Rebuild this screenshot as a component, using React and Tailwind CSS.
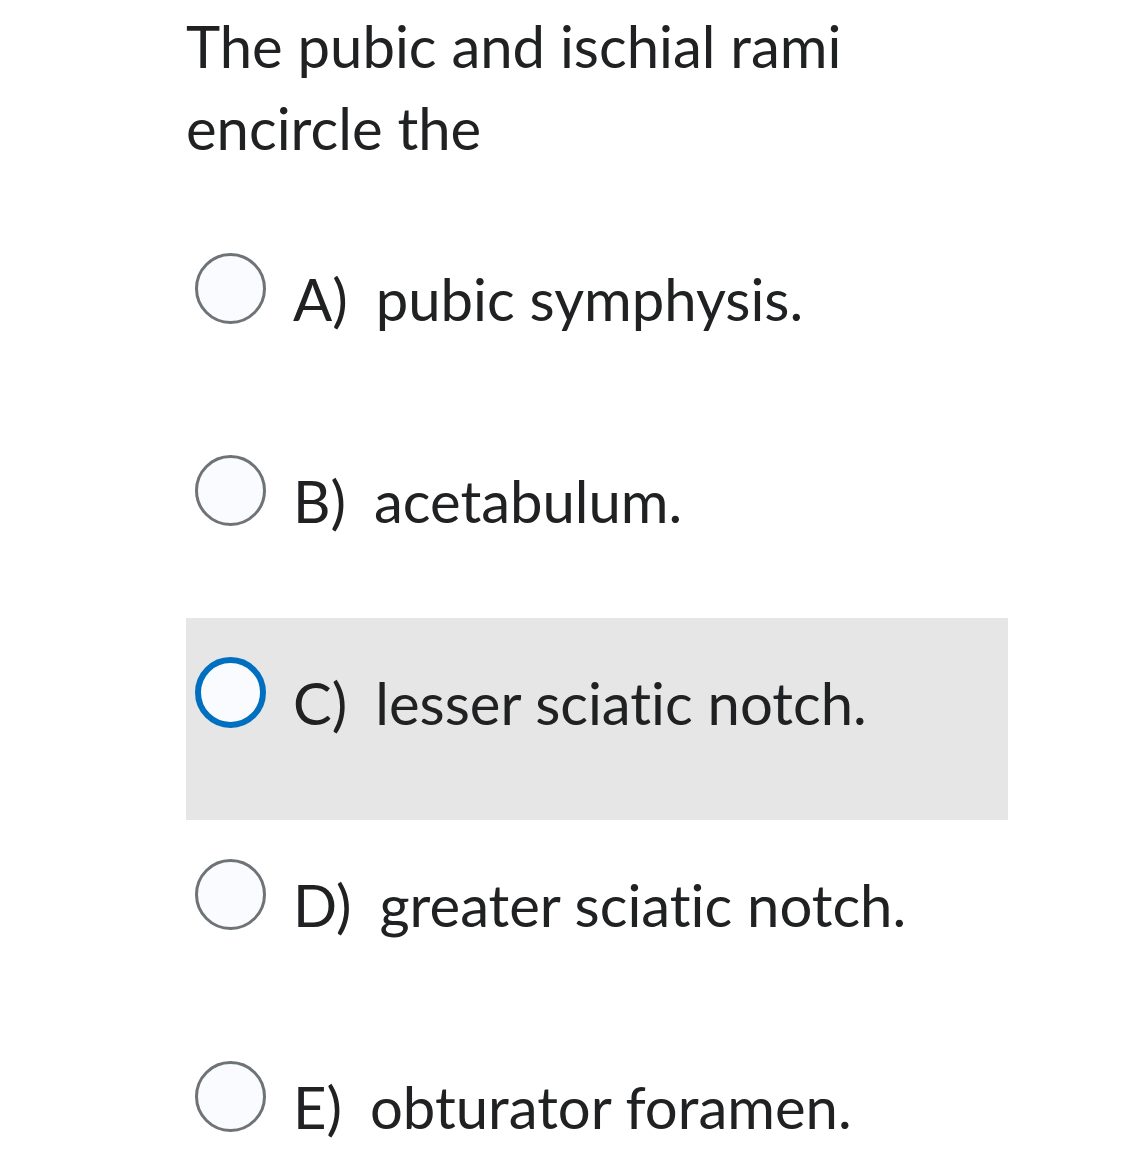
const options = [
  { letter: 'A)', text: 'pubic symphysis.' },
  { letter: 'B)', text: 'acetabulum.' },
  { letter: 'C)', text: 'lesser sciatic notch.', active: true },
  { letter: 'D)', text: 'greater sciatic notch.' },
  { letter: 'E)', text: 'obturator foramen.' },
];

function Radio({ active }) {
  return (
    <span
      className={
        'shrink-0 w-[71px] h-[71px] rounded-full bg-[#f9fbff] ' +
        (active ? 'border-[6px] border-[#006fbf]' : 'border-[3px] border-[#6e7376]')
      }
    />
  );
}

export default function App() {
  return (
    <div className="min-h-[1176px] bg-white text-[#202122] font-['Lato','Liberation_Sans',sans-serif] [font-variant-ligatures:none]">
      <div className="pl-[186px] w-[1008px]">
        <h1 className="text-[58px] leading-[82px] pt-[5px] pb-[45px] font-normal">
          The pubic and ischial rami
          <br />
          encircle the
        </h1>
        <div className="flex flex-col">
          {options.map((o) => (
            <label
              key={o.letter}
              className={
                'flex items-start h-[202px] pt-[39px] pl-[9px] ' + (o.active ? 'bg-[#e6e6e6]' : '')
              }
            >
              <Radio active={o.active} />
              <span className="flex items-center h-[71px] pt-[20px] ml-[27px] text-[58px] leading-none">
                <span>{o.letter}</span>
                <span className="ml-[28px]">{o.text}</span>
              </span>
            </label>
          ))}
        </div>
      </div>
    </div>
  );
}
